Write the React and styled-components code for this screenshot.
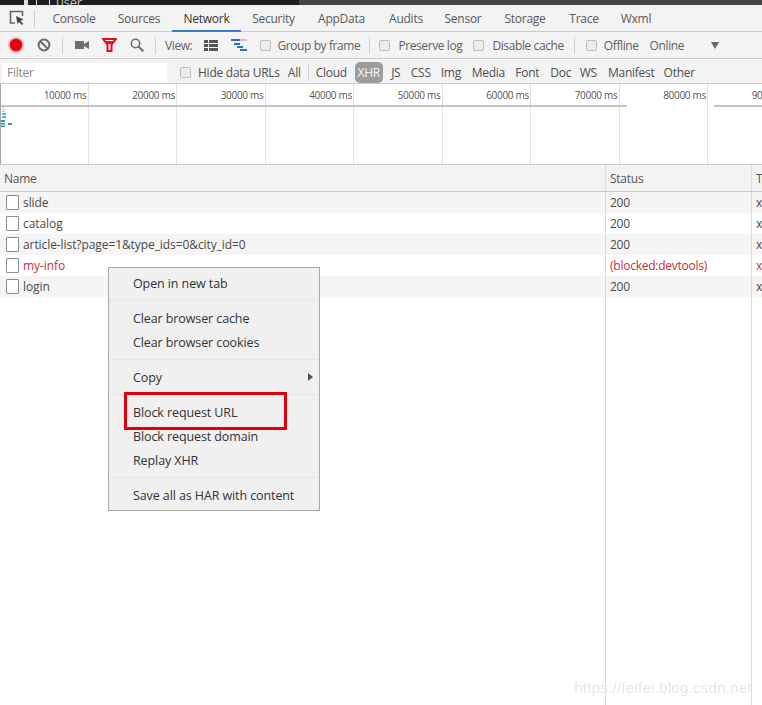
import React from "react";
import styled, { createGlobalStyle } from "styled-components";

const GlobalStyle = createGlobalStyle`
  html, body {
    margin: 0;
    height: 100%;
    background: #fff;
  }
  #root {
    height: 100%;
  }
`;

const Page = styled.div`
  position: relative;
  width: 762px;
  height: 705px;
  overflow: hidden;
  display: flex;
  flex-direction: column;
  font-family: "Open Sans", "Liberation Sans", sans-serif;
  font-size: 12px;
  letter-spacing: -0.25px;
  color: #4a4a4a;
`;

const TopStrip = styled.div`
  height: 5px;
  flex: none;
  display: flex;
  overflow: hidden;
  background: #444;
`;

const StripLeft = styled.div`
  width: 299px;
  display: flex;
  align-items: flex-end;
  background: #1e1e1e;
  color: #ccc;
`;

const StripMark = styled.span`
  width: ${(p) => p.$w}px;
  height: 5px;
  margin-left: ${(p) => p.$left}px;
  background: #ddd;
`;

const StripText = styled.span`
  margin-left: 6px;
  margin-bottom: -3px;
  line-height: 12px;
  font-size: 13px;
`;

const TabBar = styled.div`
  height: 27px;
  flex: none;
  display: flex;
  align-items: stretch;
  background: #f3f3f3;
  border-bottom: 1px solid #ccc;
  box-sizing: border-box;
`;

const InspectBox = styled.div`
  width: 34px;
  display: flex;
  align-items: center;
  padding-left: 9px;
  box-sizing: border-box;
`;

const Tab = styled.div`
  width: ${(p) => p.$w}px;
  display: flex;
  align-items: center;
  justify-content: center;
  padding-top: 2px;
  box-sizing: border-box;
  font-size: 12px;
  color: ${(p) => (p.$active ? "#333" : "#5a5a5a")};
  border-bottom: 2px solid ${(p) => (p.$active ? "#3a7bd5" : "transparent")};
  margin-bottom: -1px;
`;

const TabDivider = styled.div`
  width: 1px;
  height: 17px;
  align-self: center;
  margin-right: 7px;
  background: #ccc;
`;

const Toolbar = styled.div`
  height: 27px;
  flex: none;
  display: flex;
  align-items: center;
  background: #f3f3f3;
  border-bottom: 1px solid #ccc;
  box-sizing: border-box;
  letter-spacing: -0.4px;
`;

const Slot = styled.div`
  display: flex;
  align-items: center;
  flex: none;
  margin-left: ${(p) => p.$left || 0}px;
  white-space: nowrap;
  color: ${(p) => p.$color || "#5f5f5f"};
`;

const Divider = styled.div`
  width: 1px;
  height: 17px;
  flex: none;
  margin-left: ${(p) => p.$left}px;
  background: #d0d0d0;
`;

const Box = styled.span`
  display: block;
  width: 11px;
  height: 11px;
  flex: none;
  margin-left: ${(p) => p.$left || 0}px;
  border: 1px solid #bdbdbd;
  border-radius: 2px;
  background: #ececec;
  box-sizing: border-box;
`;

const FilterBar = styled.div`
  height: 25px;
  flex: none;
  display: flex;
  align-items: center;
  padding-top: 2px;
  background: #f3f3f3;
  border-bottom: 1px solid #ccc;
  box-sizing: border-box;
`;

const FilterInput = styled.div`
  width: 165px;
  height: 19px;
  margin-left: 2px;
  padding-left: 5px;
  box-sizing: border-box;
  display: flex;
  align-items: center;
  background: #fff;
  color: #8a8a8a;
`;

const TypeChip = styled.div`
  height: 21px;
  flex: none;
  display: flex;
  align-items: center;
  justify-content: center;
  box-sizing: border-box;
  width: ${(p) => p.$w}px;
  margin-left: ${(p) => p.$left}px;
  border-radius: ${(p) => (p.$active ? "5px" : "0")};
  background: ${(p) => (p.$active ? "#9c9c9c" : "transparent")};
  color: ${(p) => (p.$active ? "#f4f4f4" : "#4f4f4f")};
`;

const Overview = styled.div`
  position: relative;
  height: 81px;
  flex: none;
  display: flex;
  background: #fff;
  border-left: 1px solid #a5a5a5;
  border-bottom: 1px solid #ccc;
  box-sizing: border-box;
  overflow: hidden;
`;

const OverviewCell = styled.div`
  flex: none;
  width: 88.5px;
  box-sizing: border-box;
  border-right: 1px solid #e2e2e2;
  padding: 4px 1px 0 0;
  text-align: right;
  font-size: 10px;
  letter-spacing: -0.3px;
  line-height: 14px;
  color: #555;
  white-space: nowrap;
  &:first-child {
    width: 87.5px;
  }
`;

const RulerLine = styled.div`
  position: absolute;
  top: 21px;
  left: ${(p) => p.$left}px;
  width: ${(p) => p.$w}px;
  height: 2px;
  background: #c4c4c4;
`;

const Bars = styled.svg`
  position: absolute;
  top: 23px;
  left: 0;
`;

const Table = styled.div`
  flex: 1;
  min-height: 0;
  display: flex;
  flex-direction: column;
`;

const Row = styled.div`
  display: grid;
  grid-template-columns: 606px 146px 1fr;
  height: 21px;
  flex: none;
  background: ${(p) => (p.$shaded ? "#f5f5f5" : "#fff")};
  color: ${(p) => (p.$error ? "#c3303a" : "#4a4a4a")};
`;

const HeaderRow = styled(Row)`
  height: 27px;
  background: #f3f3f3;
  border-bottom: 1px solid #ccc;
  box-sizing: border-box;
  color: #555;
`;

const FillerRow = styled(Row)`
  flex: 1;
  height: auto;
`;

const Cell = styled.div`
  display: flex;
  align-items: center;
  overflow: hidden;
  white-space: nowrap;
  padding-left: 4px;
  border-right: ${(p) => (p.$last ? "none" : "1px solid #dcdcdc")};
  box-sizing: border-box;
`;

const NameCell = styled(Cell)`
  letter-spacing: -0.08px;
`;

const FileIcon = styled.span`
  display: block;
  width: 13px;
  height: 15px;
  flex: none;
  margin-left: 2px;
  margin-right: 4px;
  border: 1px solid #8c8c8c;
  border-radius: 1px;
  background: #fff;
  box-sizing: border-box;
`;

const Menu = styled.div`
  position: absolute;
  left: 108px;
  top: 267px;
  width: 212px;
  height: 244px;
  padding: 3px 0;
  box-sizing: border-box;
  background: #f0f0f0;
  border: 1px solid #a9a9a9;
  color: #333;
  font-size: 12.5px;
  letter-spacing: -0.1px;
`;

const MenuItem = styled.div`
  position: relative;
  height: 24px;
  padding-left: 24px;
  display: flex;
  align-items: center;
  white-space: nowrap;
`;

const MenuSeparator = styled.div`
  height: 1px;
  margin: 5px 1px;
  background: #e6e6e6;
`;

const SubmenuArrow = styled.span`
  position: absolute;
  right: 6px;
  top: 8px;
  width: 0;
  height: 0;
  border-left: 5px solid #555;
  border-top: 4px solid transparent;
  border-bottom: 4px solid transparent;
`;

const RedBox = styled.div`
  position: absolute;
  left: 124px;
  top: 392px;
  width: 163px;
  height: 38px;
  box-sizing: border-box;
  border: 3px solid #e0000b;
`;

const Watermark = styled.div`
  position: absolute;
  right: 10px;
  bottom: 9px;
  font-family: "Liberation Sans", sans-serif;
  font-size: 15.2px;
  letter-spacing: 0.2px;
  color: #e6e6e6;
  white-space: nowrap;
  filter: blur(0.5px);
`;

const InspectIcon = () => (
  <svg width="16" height="16" viewBox="0 0 16 16">
    <path d="M6 13H1.5V1.5h12V6" fill="none" stroke="#666" strokeWidth="1.6" />
    <path d="M7 6l7.5 3.5-3 1.2 2.6 3-1.4 1.2-2.6-3L8.5 14z" fill="#444" />
  </svg>
);

const RecordIcon = () => (
  <svg width="18" height="18" viewBox="0 0 18 18">
    <circle cx="9" cy="9" r="8" fill="#f3b0b0" />
    <circle cx="9" cy="9" r="6.2" fill="#e00010" />
  </svg>
);

const ClearIcon = () => (
  <svg width="14" height="14" viewBox="0 0 14 14">
    <circle cx="7" cy="7" r="5.4" fill="none" stroke="#6e6e6e" strokeWidth="2" />
    <path d="M3.2 3.2l7.6 7.6" stroke="#6e6e6e" strokeWidth="2" />
  </svg>
);

const CameraIcon = () => (
  <svg width="14" height="10" viewBox="0 0 14 10">
    <path d="M0 1h9v8H0zM9 4l5-3v8L9 6z" fill="#6e6e6e" />
  </svg>
);

const FunnelIcon = () => (
  <svg width="15" height="14" viewBox="0 0 15 14">
    <path d="M1 1h13L9.5 6.5V13h-4V6.5z" fill="none" stroke="#e0101c" strokeWidth="2" />
    <path d="M3 3h9L9 6H6z" fill="#e0101c" />
  </svg>
);

const SearchIcon = () => (
  <svg width="14" height="14" viewBox="0 0 14 14">
    <circle cx="5.5" cy="5.5" r="4.2" fill="none" stroke="#6e6e6e" strokeWidth="1.6" />
    <path d="M8.5 8.5l4.8 4.8" stroke="#6e6e6e" strokeWidth="2" />
  </svg>
);

const ListIcon = () => (
  <svg width="14" height="11" viewBox="0 0 14 11">
    <path d="M0 0h4v3H0zM5 0h9v3H5zM0 4h4v3H0zM5 4h9v3H5zM0 8h4v3H0zM5 8h9v3H5z" fill="#555" />
  </svg>
);

const WaterfallIcon = () => (
  <svg width="16" height="12" viewBox="0 0 16 12">
    <path d="M0 0h9v2H0z" fill="#2a6fc9" />
    <path d="M9 0h7v2H9z" fill="#c9b8ec" />
    <path d="M3 4h6v2H3z" fill="#2a6fc9" />
    <path d="M6 7h6v2H6z" fill="#2a6fc9" />
    <path d="M9 10h7v2H9z" fill="#2a6fc9" />
  </svg>
);

const Dropdown = () => (
  <svg width="8" height="8" viewBox="0 0 8 8">
    <path d="M0 1h8L4 8z" fill="#666" />
  </svg>
);

const tabs = [
  ["Console", 64],
  ["Sources", 66],
  ["Network", 69, true],
  ["Security", 65],
  ["AppData", 71],
  ["Audits", 58],
  ["Sensor", 56],
  ["Storage", 68],
  ["Trace", 50],
  ["Wxml", 54],
];

const types = [
  ["All", 13, 8],
  ["Cloud", 31, 7],
  ["XHR", 28, 8, true],
  ["JS", 10, 8],
  ["CSS", 20, 10],
  ["Img", 20, 10],
  ["Media", 33, 11],
  ["Font", 23, 11],
  ["Doc", 20, 12],
  ["WS", 17, 9],
  ["Manifest", 45, 12],
  ["Other", 29, 11],
];

const ticks = ["10000 ms", "20000 ms", "30000 ms", "40000 ms", "50000 ms", "60000 ms", "70000 ms", "80000 ms", "90000 ms"];

const requests = [
  { name: "slide", status: "200", shaded: true },
  { name: "catalog", status: "200" },
  { name: "article-list?page=1&type_ids=0&city_id=0", status: "200", shaded: true },
  { name: "my-info", status: "(blocked:devtools)", error: true },
  { name: "login", status: "200", shaded: true },
];

const App = () => {
  return (
    <Page>
      <GlobalStyle />
      <TopStrip>
        <StripLeft>
          <StripMark $left={24} $w={4} />
          <StripMark $left={8} $w={1} />
          <StripMark $left={12} $w={1} />
          <StripText>user</StripText>
        </StripLeft>
      </TopStrip>
      <TabBar>
        <InspectBox>
          <InspectIcon />
        </InspectBox>
        <TabDivider />
        {tabs.map(([label, w, active]) => (
          <Tab key={label} $w={w} $active={active}>
            {label}
          </Tab>
        ))}
      </TabBar>
      <Toolbar>
        <Slot $left={7}><RecordIcon /></Slot>
        <Slot $left={12}><ClearIcon /></Slot>
        <Divider $left={11} />
        <Slot $left={12}><CameraIcon /></Slot>
        <Slot $left={13}><FunnelIcon /></Slot>
        <Slot $left={13}><SearchIcon /></Slot>
        <Divider $left={11} />
        <Slot $left={9}>View:</Slot>
        <Slot $left={12}><ListIcon /></Slot>
        <Slot $left={13}><WaterfallIcon /></Slot>
        <Box $left={13} />
        <Slot $left={6}>Group by frame</Slot>
        <Divider $left={9} />
        <Box $left={9} />
        <Slot $left={8}>Preserve log</Slot>
        <Box $left={11} />
        <Slot $left={8}>Disable cache</Slot>
        <Divider $left={10} />
        <Box $left={11} />
        <Slot $left={7}>Offline</Slot>
        <Slot $left={11}>Online</Slot>
        <Slot $left={27}><Dropdown /></Slot>
      </Toolbar>
      <FilterBar>
        <FilterInput>Filter</FilterInput>
        <Box $left={13} />
        <Slot $left={7} $color="#4f4f4f">Hide data URLs</Slot>
        {types.map(([label, w, left, active]) => (
          <React.Fragment key={label}>
            {label === "Cloud" && <Divider $left={7} />}
            <TypeChip $w={w} $left={left} $active={active}>
              {label}
            </TypeChip>
          </React.Fragment>
        ))}
      </FilterBar>
      <Overview>
        {ticks.map((t) => (
          <OverviewCell key={t}>{t}</OverviewCell>
        ))}
        <RulerLine $left={0} $w={626} />
        <RulerLine $left={713} $w={48} />
        <Bars width="14" height="22" viewBox="0 0 14 22">
          <path d="M1 0h2v1H1zM1 2h3v1H1zM1 4h3v1H1z" fill="#a9d3dc" />
          <path d="M1 6h4v2H1zM1 9h4v2H1z" fill="#5fb2c0" />
          <path d="M0 13h4v2H0zM0 16h4v1.500H0zM0 18.500h4v1.500H0zM7 16h4v2H7z" fill="#2b9c95" />
        </Bars>
      </Overview>
      <Table>
        <HeaderRow>
          <Cell>Name</Cell>
          <Cell>Status</Cell>
          <Cell $last>T</Cell>
        </HeaderRow>
        {requests.map((r) => (
          <Row key={r.name} $shaded={r.shaded} $error={r.error}>
            <NameCell>
              <FileIcon />
              {r.name}
            </NameCell>
            <Cell>{r.status}</Cell>
            <Cell $last>x</Cell>
          </Row>
        ))}
        <FillerRow>
          <Cell />
          <Cell />
          <Cell $last />
        </FillerRow>
      </Table>
      <Menu>
        <MenuItem>Open in new tab</MenuItem>
        <MenuSeparator />
        <MenuItem>Clear browser cache</MenuItem>
        <MenuItem>Clear browser cookies</MenuItem>
        <MenuSeparator />
        <MenuItem>
          Copy
          <SubmenuArrow />
        </MenuItem>
        <MenuSeparator />
        <MenuItem>Block request URL</MenuItem>
        <MenuItem>Block request domain</MenuItem>
        <MenuItem>Replay XHR</MenuItem>
        <MenuSeparator />
        <MenuItem>Save all as HAR with content</MenuItem>
      </Menu>
      <RedBox />
      <Watermark>https://feifei.blog.csdn.net</Watermark>
    </Page>
  );
};

export default App;
